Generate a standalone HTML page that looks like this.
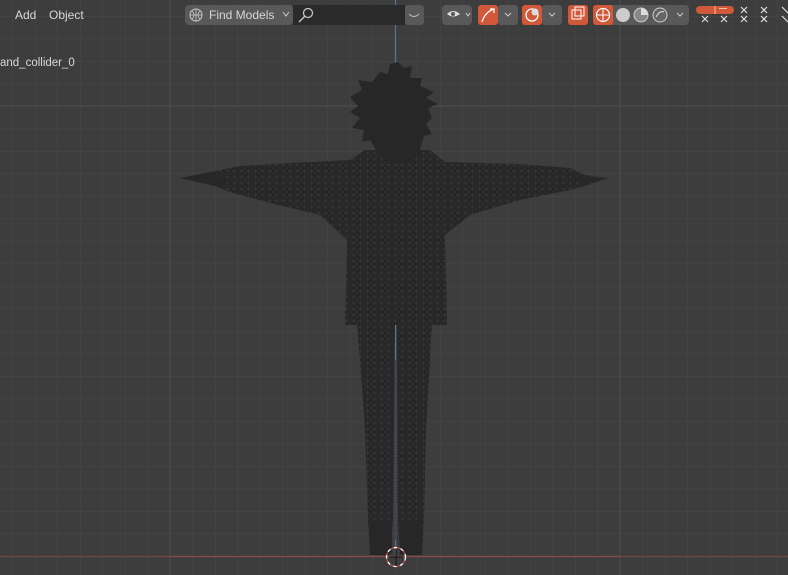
<!DOCTYPE html>
<html><head><meta charset="utf-8"><style>
body{margin:0;width:788px;height:575px;overflow:hidden;background:#3d3d3d;font-family:"Liberation Sans",sans-serif;}
svg{position:absolute;left:0;top:0}
.t{position:absolute;color:#d8d8d8;font-size:12px}
</style></head><body>
<svg width="788" height="575" viewBox="0 0 788 575">
<defs>
<pattern id="g" x="12.5" y="556" width="22.5" height="22.5" patternUnits="userSpaceOnUse">
<path d="M0 0V22.5M0 0H22.5" stroke="#464646" stroke-width="1.2"/>
</pattern>
<pattern id="m" width="7" height="6" patternUnits="userSpaceOnUse">
<rect width="7" height="6" fill="#232323"/>
<path d="M0 0L7 6M7 0L0 6M0 3H7M3.5 0V6" stroke="#3c3c3c" stroke-width="0.45"/>
</pattern>
</defs>
<rect width="788" height="575" fill="url(#g)"/>
<path d="M170 0V575M620 0V575M0 106H788" stroke="#4b4b4b" stroke-width="1.2"/>
<path d="M0 556.5H788" stroke="#6b4646" stroke-width="1.5"/>
<path d="M170 556.5H620" stroke="#8a4a4a" stroke-width="1"/>
<path d="M395.5 0V556" stroke="#56749a" stroke-width="1.3"/>
<g fill="url(#m)">
<path d="M180 178L200 174L240 166L290 163L350 160L365 150L430 150L445 162L520 164L570 168L585 175L608 178L585 186L570 190L520 200L470 215L445 235L447 325L345 325L347 240L320 215L270 203L230 192L215 186Z"/>
<path d="M357 325L395 325L394 430L393 520L390 555L370 555L368 520L365 430L360 360Z"/>
<path d="M397 325L432 325L430 360L426 430L424 520L422 555L400 555L398 520Z"/>
</g>
<g fill="#272727">
<path d="M350 97L362 90L358 80L372 82L380 72L388 74L390 64L398 62L404 68L412 66L410 78L422 78L420 86L434 92L426 98L438 104L428 108L432 118L426 124L432 134L424 136L420 150L408 163L388 163L376 150L370 140L362 142L364 130L352 128L360 118L350 112L358 106Z"/>
<path d="M180 178L215 174L230 182L215 186Z"/>
<path d="M570 176L608 178L585 184Z"/>
<rect x="370" y="520" width="22" height="35" rx="5"/>
<rect x="400" y="520" width="22" height="35" rx="5"/>
</g>
<path d="M395.5 360V540" stroke="#3d4a55" stroke-width="2"/>
<circle cx="396" cy="557" r="9.5" fill="none" stroke="#fff" stroke-width="1.3" stroke-dasharray="4 3"/>
<circle cx="396" cy="557" r="9.5" fill="none" stroke="#c44" stroke-width="1.3" stroke-dasharray="3 4" stroke-dashoffset="3.5"/>
<path d="M396 549V566M389 557H403" stroke="#111" stroke-width="1"/>
<rect x="185" y="5" width="108" height="20" rx="4" fill="#595959"/>
<rect x="293" y="5" width="112" height="20" fill="#2a2a2a"/>
<rect x="405" y="5" width="19" height="20" rx="3" fill="#595959"/>
<circle cx="196" cy="15" r="6" fill="none" stroke="#ccc" stroke-width="1"/>
<path d="M190 15H202M196 9V21M192 11Q196 15 192 19M200 11Q196 15 200 19" stroke="#ccc" stroke-width="0.8" fill="none"/>
<path d="M283 12L286 16L289 12" stroke="#ccc" fill="none"/>
<circle cx="308" cy="13" r="4.5" fill="none" stroke="#ccc" stroke-width="1.2"/>
<path d="M305 16L299 22" stroke="#ccc" stroke-width="1.3"/>
<path d="M409 14Q414 19 419 14" stroke="#bbb" fill="none"/>
<rect x="442" y="5" width="30" height="20" rx="4" fill="#595959"/>
<path d="M447 14Q453 8 460 14Q453 19 447 14Z" fill="#ddd"/><circle cx="453" cy="14" r="2" fill="#595959"/>
<path d="M466 13L468 16L470 13" stroke="#ccc" fill="none"/>
<rect x="478" y="5" width="20" height="20" rx="3" fill="#d2583a"/>
<rect x="498" y="5" width="20" height="20" rx="3" fill="#595959"/>
<path d="M482 22Q485 12 494 9M490 9H494V13" stroke="#fff" fill="none" stroke-width="1.2"/>
<path d="M505 13L508 16L511 13" stroke="#ccc" fill="none"/>
<rect x="522" y="5" width="20" height="20" rx="3" fill="#d2583a"/>
<rect x="542" y="5" width="20" height="20" rx="3" fill="#595959"/>
<circle cx="532" cy="15" r="6" fill="none" stroke="#fff" stroke-width="1.3"/><circle cx="535" cy="12" r="3.5" fill="#ddd"/>
<path d="M549 13L552 16L555 13" stroke="#ccc" fill="none"/>
<rect x="568" y="5" width="20" height="20" rx="3" fill="#d2583a"/>
<rect x="572" y="10" width="9" height="9" fill="none" stroke="#fff"/><rect x="575" y="7" width="9" height="9" fill="none" stroke="#fff"/>
<rect x="593" y="5" width="96" height="20" rx="4" fill="#595959"/>
<rect x="593" y="5" width="20" height="20" rx="3" fill="#d2583a"/>
<circle cx="603" cy="15" r="6.5" fill="none" stroke="#fff" stroke-width="1.2"/><path d="M596.5 15H609.5M603 8.5V21.5" stroke="#fff"/>
<circle cx="623" cy="15" r="7" fill="#ccc"/>
<circle cx="641" cy="15" r="7" fill="#888" stroke="#ccc"/><path d="M641 8A7 7 0 0 1 648 15H641Z" fill="#ddd"/>
<circle cx="660" cy="15" r="7" fill="#666" stroke="#ccc"/><path d="M656 17Q660 10 664 12" stroke="#ddd" fill="none"/>
<path d="M677 13L680 16L683 13" stroke="#ccc" fill="none"/>
<rect x="696" y="6" width="38" height="8" rx="4" fill="#d2583a"/>
<path d="M715 6V14M719 8.5H727" stroke="#f3c0a8"/>
<g stroke="#ddd" stroke-width="1.2">
<path d="M702 16L708 22M708 16L702 22M721 16L727 22M727 16L721 22M741 7L747 13M747 7L741 13M741 16L747 22M747 16L741 22M761 7L767 13M767 7L761 13M761 16L767 22M767 16L761 22M782 7L788 13M782 16L788 22"/>
</g>
</svg>
<div class="t" style="left:15px;top:8px">Add</div>
<div class="t" style="left:49px;top:8px">Object</div>
<div class="t" style="left:209px;top:8px">Find Models</div>
<div class="t" style="left:0;top:57px;font-size:11.5px">and_collider_0</div>
</body></html>
